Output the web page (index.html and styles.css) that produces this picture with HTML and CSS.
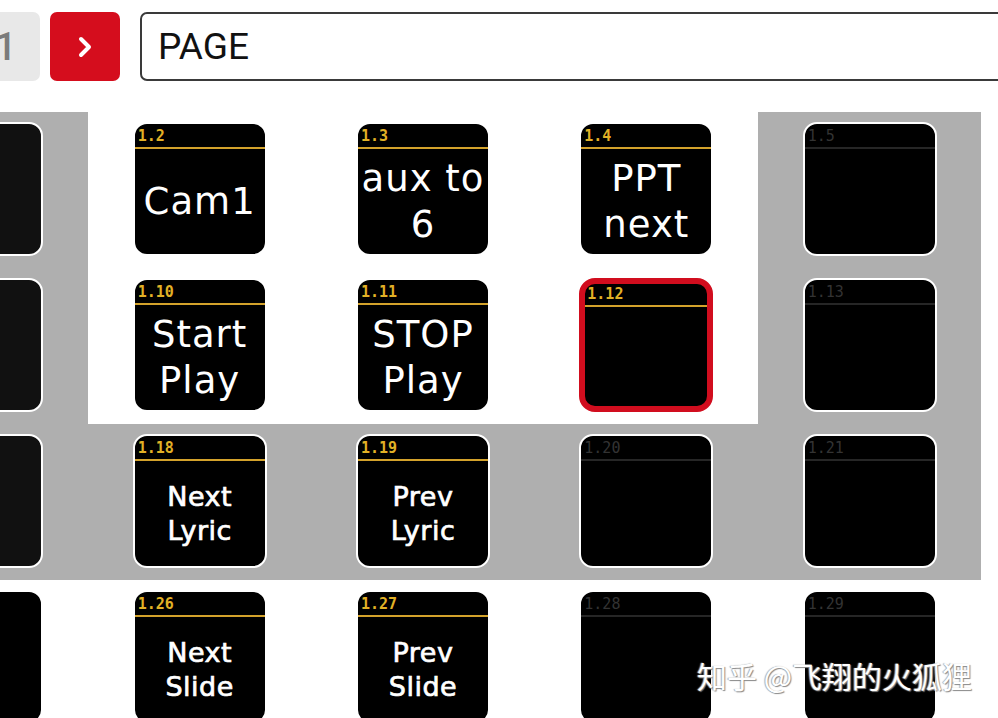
FILE: index.html
```html
<!DOCTYPE html>
<html>
<head>
<meta charset="utf-8">
<link rel="stylesheet" href="styles.css">
</head>
<body>
<div class="page">
  <div class="topbar">
    <div class="pagenum"><span>1</span></div>
    <div class="nextbtn">
      <svg width="20" height="24" viewBox="0 0 20 24"><path d="M6 4 L14 12 L6 20" fill="none" stroke="#fff" stroke-width="4" stroke-linecap="round" stroke-linejoin="round"/></svg>
    </div>
    <div class="pagename">PAGE</div>
  </div>

  <div class="grid">
    <div class="cell gray"><div class="btn side"></div></div>
    <div class="cell"><div class="btn"><div class="num">1.2</div><div class="label big">Cam1</div></div></div>
    <div class="cell"><div class="btn"><div class="num">1.3</div><div class="label big">aux to<br>6</div></div></div>
    <div class="cell"><div class="btn"><div class="num">1.4</div><div class="label big">PPT<br>next</div></div></div>
    <div class="cell gray"><div class="btn empty"><div class="num">1.5</div><div class="label"></div></div></div>

    <div class="cell gray"><div class="btn side"></div></div>
    <div class="cell"><div class="btn"><div class="num">1.10</div><div class="label big">Start<br>Play</div></div></div>
    <div class="cell"><div class="btn"><div class="num">1.11</div><div class="label big">STOP<br>Play</div></div></div>
    <div class="cell"><div class="btn selected"><div class="num">1.12</div><div class="label"></div></div></div>
    <div class="cell gray"><div class="btn empty"><div class="num">1.13</div><div class="label"></div></div></div>

    <div class="cell gray"><div class="btn side"></div></div>
    <div class="cell gray"><div class="btn"><div class="num">1.18</div><div class="label small">Next<br>Lyric</div></div></div>
    <div class="cell gray"><div class="btn"><div class="num">1.19</div><div class="label small">Prev<br>Lyric</div></div></div>
    <div class="cell gray"><div class="btn empty"><div class="num">1.20</div><div class="label"></div></div></div>
    <div class="cell gray"><div class="btn empty"><div class="num">1.21</div><div class="label"></div></div></div>

    <div class="cell"><div class="btn side dark"></div></div>
    <div class="cell"><div class="btn"><div class="num">1.26</div><div class="label small">Next<br>Slide</div></div></div>
    <div class="cell"><div class="btn"><div class="num">1.27</div><div class="label small">Prev<br>Slide</div></div></div>
    <div class="cell"><div class="btn empty"><div class="num">1.28</div><div class="label"></div></div></div>
    <div class="cell"><div class="btn empty"><div class="num">1.29</div><div class="label"></div></div></div>
  </div>

  <div class="watermark">知乎 @飞翔的火狐狸</div>
</div>
</body>
</html>
```

FILE: styles.css
```css
html, body {
  margin: 0;
  padding: 0;
  background: #ffffff;
}

.page {
  position: relative;
  width: 998px;
  height: 718px;
  overflow: hidden;
  font-family: "DejaVu Sans", sans-serif;
}

.topbar {
  display: flex;
  align-items: stretch;
  padding-top: 12px;
  height: 69px;
  gap: 10px;
}

.pagenum {
  flex: none;
  width: 70px;
  margin-left: -30px;
  background: #e8e8e8;
  border-radius: 7px;
  color: #7b7b7b;
  font-family: Roboto, "Liberation Sans", sans-serif;
  font-weight: 500;
  font-size: 38px;
  display: flex;
  align-items: center;
  justify-content: flex-start;
  padding-left: 25px;
  box-sizing: border-box;
}

.nextbtn {
  flex: none;
  width: 70px;
  background: #d50d1d;
  border-radius: 7px;
  display: flex;
  align-items: center;
  justify-content: center;
}

.pagename {
  margin-left: 10px;
  width: 900px;
  flex: none;
  box-sizing: border-box;
  border: 2px solid #3a3a3a;
  border-radius: 7px;
  padding-left: 16px;
  display: flex;
  align-items: center;
  font-family: Roboto, "Liberation Sans", sans-serif;
  font-size: 37px;
  color: #111;
}

.grid {
  margin-top: 31px;
  margin-left: -135.33px;
  display: grid;
  grid-template-columns: repeat(5, 223.33px);
  grid-auto-rows: 156px;
}

.cell {
  display: flex;
  justify-content: center;
  align-items: flex-start;
  padding-top: 10px;
  box-sizing: border-box;
  background: #ffffff;
}

.cell.gray {
  background: #afafaf;
}

.btn {
  width: 134px;
  height: 134px;
  box-sizing: border-box;
  border: 2px solid #ffffff;
  border-radius: 14px;
  background: #000;
  display: flex;
  flex-direction: column;
  overflow: hidden;
}

.btn.side {
  background: #111111;
}

.btn.side.dark {
  background: #000000;
}

.btn.selected {
  border: 6px solid #d10d1e;
  border-radius: 16px;
}

.num {
  height: 23px;
  line-height: 24px;
  padding-left: 3px;
  border-bottom: 2px solid #d3a22b;
  color: #e2b126;
  font-family: "DejaVu Sans Mono", monospace;
  font-weight: bold;
  font-size: 15px;
  flex: none;
}

.btn.selected .num {
  height: 21px;
  line-height: 20px;
  padding-left: 2px;
}

.btn.empty .num {
  color: #333333;
  font-weight: normal;
  border-bottom-color: #262626;
}

.label {
  flex: 1;
  display: flex;
  align-items: center;
  justify-content: center;
  text-align: center;
  color: #ffffff;
  white-space: nowrap;
}

.label.big {
  font-size: 37px;
  line-height: 46px;
  letter-spacing: 1px;
}

.label.small {
  font-size: 27px;
  line-height: 34px;
  letter-spacing: 0.5px;
  -webkit-text-stroke: 0.7px #ffffff;
}

.watermark {
  position: absolute;
  left: 697px;
  top: 657px;
  font-family: "Noto Sans CJK SC", sans-serif;
  font-size: 30px;
  line-height: 36px;
  color: #ffffff;
  text-shadow: 1px 1px 1px #888, -1px 0 1px #aaa;
  white-space: nowrap;
}
```
